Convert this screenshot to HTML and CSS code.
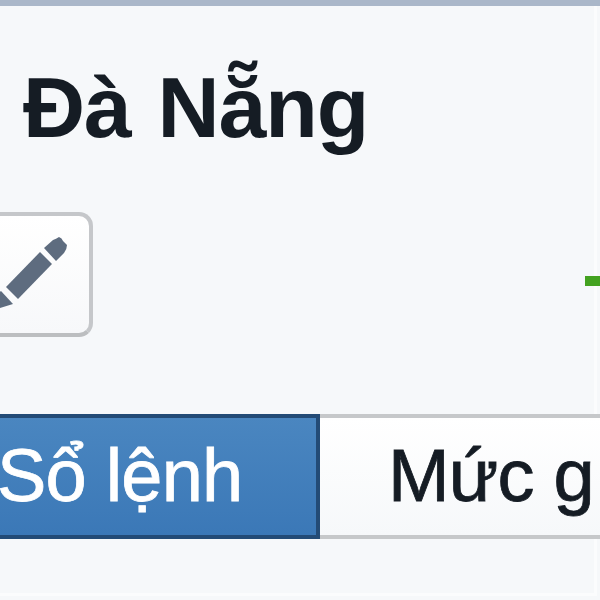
FILE: index.html
```
<!DOCTYPE html>
<html lang="vi">
<head>
<meta charset="UTF-8">
<meta name="viewport" content="width=device-width, initial-scale=1.0">
<title>Đà Nẵng</title>
<link rel="stylesheet" href="styles.css">
</head>
<body>
<div class="panel">
  <h1>Đà Nẵng</h1>
  <div class="toolbar">
    <button class="edit-btn" type="button" aria-label="Edit">
      <svg class="pencil" width="90" height="118" viewBox="0 0 90 118">
        <g fill="#5e6c7f">
          <path d="M44 32 L53 24 Q56 23 59 21 Q62 22 63 25 L67 29 Q67 33 64 37 L56 45 Z"/>
          <path d="M40 36 L52 48 L18 83 L6 71 Z"/>
          <path d="M1 75 L13 88 L-6 94 L-6 80 Z"/>
        </g>
      </svg>
    </button>
    <span class="change"></span>
  </div>
  <div class="tabs">
    <div class="tab active"><span>Sổ lệnh</span></div>
    <div class="tab"><span>Mức g</span></div>
  </div>
</div>
</body>
</html>
```
FILE: styles.css
```
* { box-sizing: border-box; }
body { margin: 0; background: #f6f8fa; font-family: "Liberation Sans", Arial, sans-serif; color: #151c24; overflow: hidden; }
.panel { position: relative; z-index: 0; width: 600px; height: 600px; border-top: 6px solid #aab7c9; overflow: hidden; }
/* pale rules along the panel edges */
.panel::after { content: ""; position: absolute; z-index: -1; inset: 0 3px 4px 0; border: 3px solid rgba(255, 255, 255, .6); border-width: 0 3px 3px 0; }
h1 { margin: 52px 0 0 23px; height: 154px; font-size: 86px; line-height: 98px; font-weight: bold; letter-spacing: -1.1px; word-spacing: 4px; white-space: nowrap; }
.toolbar { display: flex; justify-content: space-between; align-items: center; height: 125px; }
.edit-btn { width: 93px; height: 125px; padding: 0; border: 4px solid #c5c7ca; border-left: 0; border-bottom-color: #bcbec0; border-radius: 0 14px 14px 0; background: linear-gradient(#fff, #f7f8fa); }
.pencil { display: block; }
.change { width: 15px; height: 10px; margin-top: 12px; background: #43a220; }
.tabs { display: flex; height: 125px; margin-top: 77px; }
.tab { flex: 1; border: 4px solid #c6c8ca; border-width: 4px 0; background: linear-gradient(#fff, #f6f8fa); font-size: 74px; line-height: 115px; letter-spacing: -0.8px; -webkit-text-stroke: 0.8px; white-space: nowrap; padding-left: 68px; }
.tab.active { flex: none; width: 320px; padding-left: 0; border: 4px solid #234b76; border-left: 0; background: linear-gradient(#4a86c0, #3b78b7); color: #fff; }
.active span { margin-left: -3px; }
```
